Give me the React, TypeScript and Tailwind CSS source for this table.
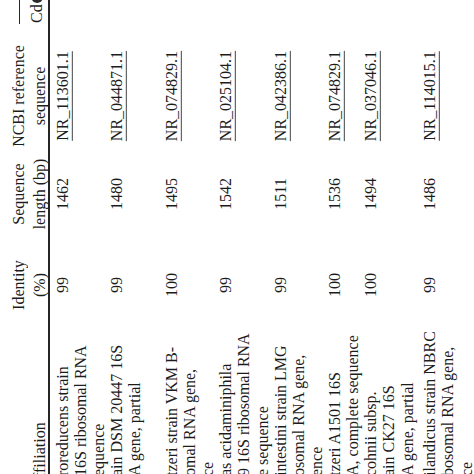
import React from "react";

type Row = {
  h: string;
  id: string;
  len: string;
  nr: string;
  aff: string[];
};

const rows: Row[] = [
  { h: "h-[54.3px]", id: "99", len: "1462", nr: "NR_113601.1", aff: ["roreducens strain", "16S ribosomal RNA", "equence"] },
  { h: "h-[54.8px]", id: "99", len: "1480", nr: "NR_044871.1", aff: ["ain DSM 20447 16S", "A gene, partial"] },
  { h: "h-[54.3px]", id: "100", len: "1495", nr: "NR_074829.1", aff: ["tzeri strain VKM B-", "omal RNA gene,", "ce"] },
  { h: "h-[54.8px]", id: "99", len: "1542", nr: "NR_025104.1", aff: ["as acidaminiphila", "9 16S ribosomal RNA", "e sequence"] },
  { h: "h-[54px]", id: "99", len: "1511", nr: "NR_042386.1", aff: ["intestini strain LMG", "osomal RNA gene,", "ence"] },
  { h: "h-[36.2px]", id: "100", len: "1536", nr: "NR_074829.1", aff: ["tzeri A1501 16S", "A, complete sequence"] },
  { h: "h-[59px]", id: "100", len: "1494", nr: "NR_037046.1", aff: ["cohnii subsp.", "ain CK27 16S", "A gene, partial"] },
  { h: "h-[54.3px]", id: "99", len: "1486", nr: "NR_114015.1", aff: ["ilandicus strain NBRC", "bosomal RNA gene,", "ce"] },
];

const cols = "grid grid-cols-[150px_78px_104px_92px_96px]";
const glyph = "inline-block scale-y-[1.1]";

export default function App() {
  return (
    <div className="relative w-[474px] h-[474px] overflow-hidden bg-white">
      <div className="absolute left-0 top-0 w-[474px] h-[474px] origin-top-left [transform:translateY(474px)_rotate(-90deg)]">
        <div className="w-[520px] text-[16px] text-[#1c1c1c] [font-family:'Liberation_Serif','Times_New_Roman',serif]">
          {/* header */}
          <div className={`${cols} h-[50px] pt-[7px] leading-[21px] border-b-2 border-[#262626]`}>
            <div className="flex flex-col items-start -ml-[4px] whitespace-nowrap">
              <span>&nbsp;</span>
              <span className={glyph}>ffiliation</span>
            </div>
            <div className="flex flex-col items-center">
              <span className={glyph}>Identity</span>
              <span className={glyph}>(%)</span>
            </div>
            <div className="flex flex-col items-center whitespace-nowrap">
              <span className={glyph}>Sequence</span>
              <span className={glyph}>length (bp)</span>
            </div>
            <div className="flex flex-col items-center whitespace-nowrap">
              <span className={glyph}>NCBI reference</span>
              <span className={glyph}>sequence</span>
            </div>
            <div className="flex flex-col -mt-[7px]">
              <div className="ml-[26px] h-[20px] border-b-[1.5px] border-[#262626]" />
              <span className={`ml-[27px] mt-[5px] whitespace-nowrap ${glyph}`}>
                Cd<span className="inline-block ml-[1px] w-[10px] h-[10px] rounded-full bg-[#2a2a2a] align-middle" />
              </span>
            </div>
          </div>
          {/* body */}
          <div className="pt-[4px] leading-[18.1px]">
            {rows.map((r, i) => (
              <div key={i} className={`${cols} ${r.h}`}>
                <div className="flex flex-col items-start -ml-[2px] whitespace-nowrap">
                  {r.aff.map((a, j) => (
                    <span key={j} className={glyph}>{a}</span>
                  ))}
                </div>
                <div className="text-center">
                  <span className={glyph}>{r.id}</span>
                </div>
                <div className="text-center">
                  <span className={glyph}>{r.len}</span>
                </div>
                <div className="text-center">
                  <span className={`${glyph} underline decoration-[#555] underline-offset-[3px]`}>{r.nr}</span>
                </div>
                <div />
              </div>
            ))}
          </div>
        </div>
      </div>
    </div>
  );
}
